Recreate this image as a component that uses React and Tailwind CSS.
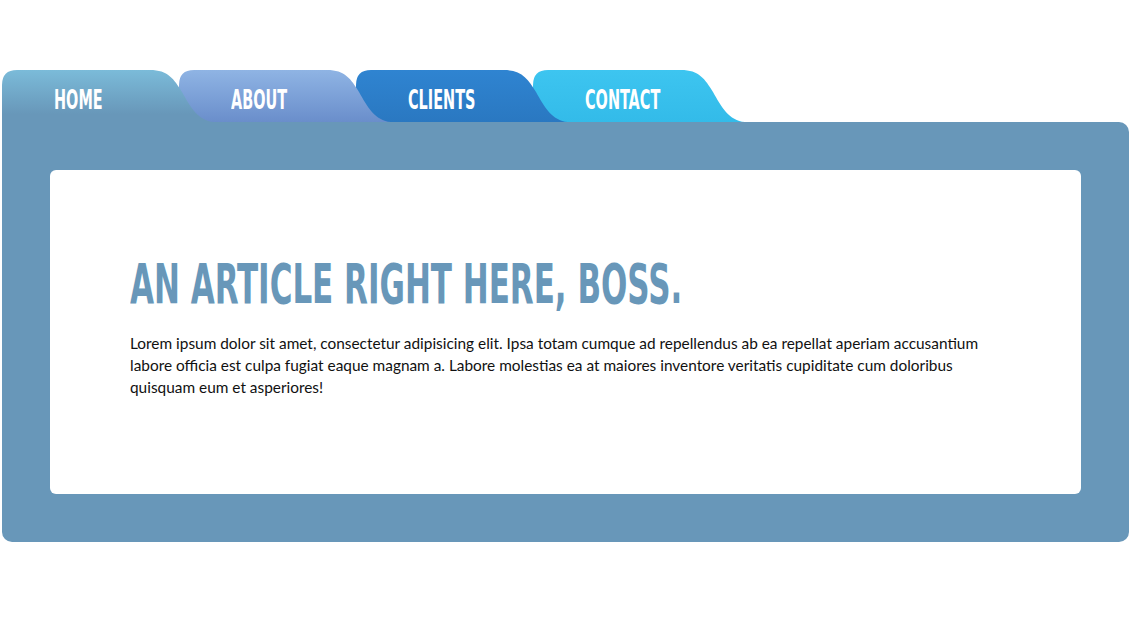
import React from "react";

const tabs = [
  { label: "HOME", top: "#7bbbd9", bottom: "#6897b9", z: "z-40" },
  { label: "ABOUT", top: "#8fb4e4", bottom: "#6a8ecb", z: "z-30" },
  { label: "CLIENTS", top: "#2f84d1", bottom: "#2a78c1", z: "z-20" },
  { label: "CONTACT", top: "#3dc5f0", bottom: "#33bbe9", z: "z-10" },
];

const condensed = '"DejaVu Sans Condensed", "DejaVu Sans", sans-serif';

function Tab({ tab, first }) {
  const id = "g-" + tab.label;
  return (
    <div className={`relative w-[212px] h-[52px] shrink-0 ${tab.z} ${first ? "" : "-ml-[35px]"}`}>
      <svg className="absolute inset-0" width="212" height="52" viewBox="0 0 212 52">
        <defs>
          <linearGradient id={id} x1="0" y1="0" x2="0" y2="1">
            <stop offset="0" stopColor={tab.top} />
            <stop offset={tab.label === "HOME" ? "0.85" : "1"} stopColor={tab.bottom} />
          </linearGradient>
        </defs>
        <path
          d="M0,52 V15 Q0,0 15,0 H148 C166,0 172,9 180,22 C188,36 196,51 212,52 Z"
          fill={`url(#${id})`}
        />
      </svg>
      <div className="relative pl-[52px] pt-[14px]">
        <span
          className="inline-block origin-left scale-x-[0.595] text-white text-[27px] leading-[32px] font-bold"
          style={{ fontFamily: condensed }}
        >
          {tab.label}
        </span>
      </div>
    </div>
  );
}

export default function App() {
  return (
    <div className="w-[1131px] h-[644px] bg-white pt-[70px] pl-[2px] overflow-hidden">
      <div className="w-[1127px]">
        <nav className="flex h-[52px]">
          {tabs.map((t, i) => (
            <Tab key={t.label} tab={t} first={i === 0} />
          ))}
        </nav>
        <div className="bg-[#6897b9] rounded-b-[10px] rounded-tr-[10px] p-[48px]">
          <div className="bg-white rounded-[6px] h-[324px] px-[80px] pt-[84px]">
            <h1
              className="inline-block origin-left scale-x-[0.615] whitespace-nowrap text-[#6897b9] text-[56px] leading-[60px] font-bold"
              style={{ fontFamily: condensed }}
            >
              AN ARTICLE RIGHT HERE, BOSS.
            </h1>
            <p
              className="mt-[18px] text-[#111] text-[15.4px] leading-[22px]"
              style={{ fontFamily: '"Lato", "Open Sans", sans-serif' }}
            >
              Lorem ipsum dolor sit amet, consectetur adipisicing elit. Ipsa totam cumque ad repellendus ab ea repellat aperiam accusantium labore officia est culpa fugiat eaque magnam a. Labore molestias ea at maiores inventore veritatis cupiditate cum doloribus quisquam eum et asperiores!
            </p>
          </div>
        </div>
      </div>
    </div>
  );
}
